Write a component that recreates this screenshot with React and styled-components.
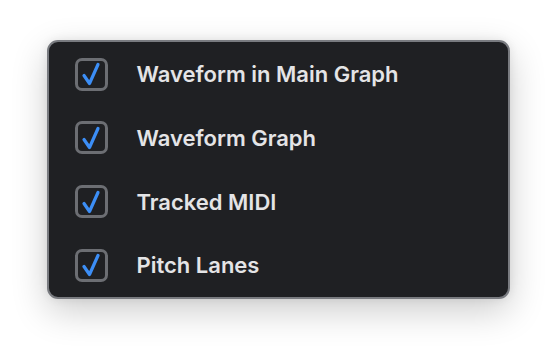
import React from "react";
import styled, { createGlobalStyle } from "styled-components";

const Global = createGlobalStyle`
  html, body { margin: 0; padding: 0; background: #ffffff; }
  body { font-family: Inter, "Noto Sans", sans-serif; }
`;

const Page = styled.div`
  width: 558px;
  height: 356px;
  box-sizing: border-box;
  padding: 40px 0 0 47px;
  background: #ffffff;
`;

const Panel = styled.div`
  width: 463px;
  height: 259px;
  box-sizing: border-box;
  border: 2.5px solid #797b80;
  border-radius: 11px;
  background: #1f2023;
  box-shadow: 0 12px 36px rgba(0, 0, 0, 0.2), 0 0 10px rgba(0, 0, 0, 0.08);
  display: flex;
  flex-direction: column;
  padding-top: 0.5px;
`;

const Row = styled.div`
  height: 64px;
  display: flex;
  align-items: center;
  padding-left: 25.5px;
  gap: 29px;
`;

const Box = styled.div`
  width: 33px;
  height: 33px;
  box-sizing: border-box;
  border: 3px solid #6c6e73;
  border-radius: 7px;
  display: flex;
  align-items: center;
  justify-content: center;
`;

const Label = styled.span`
  color: #e4e4e6;
  font-family: Inter, "Noto Sans", sans-serif;
  font-weight: 600;
  font-size: 22px;
  letter-spacing: 0;
`;

const Check = () => (
  <svg width="22" height="24" viewBox="0 0 22 24">
    <path d="M4 13.5 L9.5 21.5 L18 2.5" fill="none" stroke="#3c8ef6" strokeWidth="3.2" strokeLinecap="round" strokeLinejoin="round" />
  </svg>
);

const items = ["Waveform in Main Graph", "Waveform Graph", "Tracked MIDI", "Pitch Lanes"];

export default function App() {
  return (
    <>
      <Global />
      <Page>
        <Panel>
          {items.map((t) => (
            <Row key={t}>
              <Box><Check /></Box>
              <Label>{t}</Label>
            </Row>
          ))}
        </Panel>
      </Page>
    </>
  );
}
